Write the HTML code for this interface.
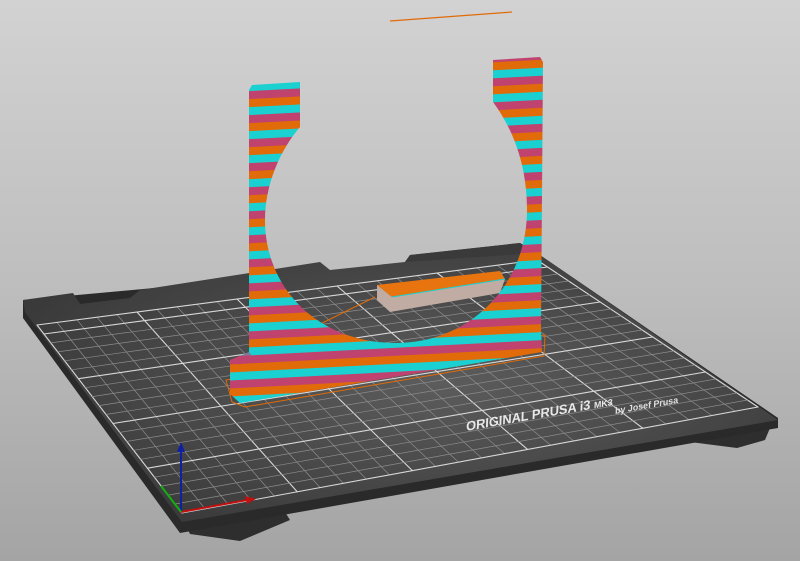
<!DOCTYPE html>
<html><head><meta charset="utf-8"><style>
html,body{margin:0;padding:0;width:800px;height:561px;overflow:hidden;background:#b4b4b4}
svg{display:block}
</style></head><body>
<svg id="s" width="800" height="561" viewBox="0 0 800 561" xmlns="http://www.w3.org/2000/svg">
<defs>
<linearGradient id="bg" x1="0" y1="0" x2="0" y2="1">
<stop offset="0" stop-color="#d2d2d2"/><stop offset="0.5" stop-color="#bebebe"/><stop offset="1" stop-color="#a4a4a4"/>
</linearGradient>
<radialGradient id="bedg" cx="0.55" cy="0.5" r="0.6">
<stop offset="0" stop-color="#5c5c5c"/><stop offset="1" stop-color="#3a3a3a"/>
</radialGradient>
<pattern id="st" width="40" height="24" patternUnits="userSpaceOnUse" patternTransform="rotate(-3)">
<rect width="40" height="8" fill="#1ad0d0"/>
<rect y="8" width="40" height="8" fill="#c0426e"/>
<rect y="16" width="40" height="8" fill="#e06b08"/>
</pattern>
<mask id="m">
<rect width="800" height="561" fill="#fff"/>
<path d="M300,127 C280,150 265,185 265,220 C265,290 320,343 396,343 C470,343 527,285 527,210 C527,160 510,125 493,102 L493,0 L300,0 Z" fill="#000"/>
</mask>
</defs>
<rect width="800" height="561" fill="url(#bg)"/>
<line x1="390" y1="21" x2="512" y2="12" stroke="#e06b08" stroke-width="1.2"/>
<polygon points="183,520 190,534 240,541 290,520 285,512" fill="#2e2e2e"/>
<polygon points="680,436 690,442 737,448 765,440 770,428" fill="#2e2e2e"/>
<polygon points="23,300 23,318 180,533 778,428 778,418 537,253" fill="#2a2a2a"/>
<polygon points="23,300 25,312 182,522 778,420 537,253 520,243 410,255 405,262 330,270 320,262 140,290 130,298 80,304 73,293" fill="url(#bedg)"/>
<polygon points="405,262 410,255 520,243 537,253" fill="#3a3a3a"/>
<g id="grid" stroke-linecap="round"></g>
<text x="0" y="0" transform="translate(466,431) rotate(-10) skewX(-12)" fill="#e8e8e8" font-family="Liberation Sans, sans-serif" font-size="13" font-weight="bold">ORIGINAL PRUSA i3 <tspan font-size="9">MK3</tspan></text>
<text x="0" y="0" transform="translate(615,414) rotate(-10) skewX(-12)" fill="#e0e0e0" font-family="Liberation Sans, sans-serif" font-size="9" font-weight="bold">by Josef Prusa</text>
<polygon points="226,380 232,402 245,407 544,356 545,335" fill="none" stroke="#e06b08" stroke-width="1"/>
<line x1="312" y1="328" x2="375" y2="297" stroke="#e06b08" stroke-width="1"/>
<polygon points="377,285 500,271 505,279 392,297" fill="#e87410"/>
<polygon points="392,297 505,279 500,293 390,312 377,300 377,285" fill="#c0aca2"/>
<line x1="392" y1="297" x2="505" y2="279" stroke="#1ad0d0" stroke-width="1"/>
<g mask="url(#m)">
<path d="M249,90 L252,85 L300,82 L300,127 L493,102 L493,60 L540,57 L543,62 L541,330 L542,352 L240,403 L230,394 L230,360 L249,352 Z" fill="url(#st)"/>
</g>
<polygon points="230,360 249,352 252,356 240,365" fill="#c0426e" opacity="0.6"/>
<line x1="181" y1="512" x2="181" y2="450" stroke="#1020a0" stroke-width="2"/>
<polygon points="177,452 185,452 181,442" fill="#1020a0"/>
<line x1="181" y1="512" x2="247" y2="500" stroke="#c01010" stroke-width="2"/>
<polygon points="245,496 247,504 256,499" fill="#c01010"/>
<line x1="181" y1="512" x2="161" y2="486" stroke="#10b010" stroke-width="2"/>
</svg>
<script>
(function(){
var g=document.getElementById('grid');
var A=[37,325],B=[537,260],C=[758,407],D=[182,513];
function P(u,v){
 var fx=D[0]+(C[0]-D[0])*u, fy=D[1]+(C[1]-D[1])*u;
 var bx=A[0]+(B[0]-A[0])*u, by=A[1]+(B[1]-A[1])*u;
 return [fx+(bx-fx)*v, fy+(by-fy)*v];}
var s='';
function L(p,q,maj){s+='<line x1="'+p[0].toFixed(1)+'" y1="'+p[1].toFixed(1)+'" x2="'+q[0].toFixed(1)+'" y2="'+q[1].toFixed(1)+'" stroke="'+(maj?'#d8d8d8':'#8c8c8c')+'" stroke-width="'+(maj?1.1:0.7)+'"/>';}
for(var i=0;i<=25;i++){L(P(i/25,0),P(i/25,1),i%5==0);}
for(var j=0;j<=21;j++){L(P(0,j/21),P(1,j/21),j%5==0||j==21);}
g.innerHTML=s;
})();
</script>
</body></html>
